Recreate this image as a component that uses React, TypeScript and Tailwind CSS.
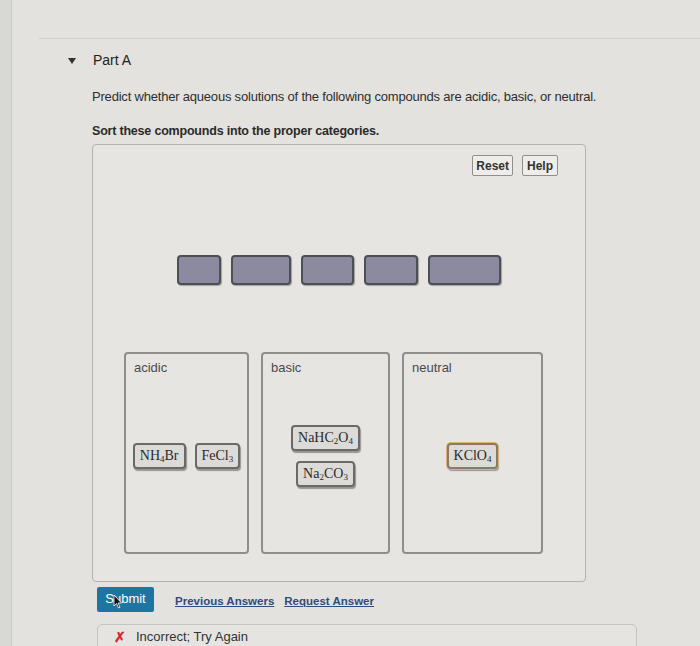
import { ReactNode } from 'react';

const sans = { fontFamily: '"Liberation Sans", Arial, sans-serif' };

function Chip({ children, glow }: { children: ReactNode; glow?: boolean }) {
  return (
    <div
      className={
        'rounded-[4px] border-2 bg-[#dcdbd7] px-[5px] py-[2px] text-[14px] leading-[18px] text-[#2a2a2a] shadow-[1px_2px_1px_rgba(0,0,0,0.35)] ' +
        (glow ? 'border-[#8a7a66] ring-1 ring-[#d8b27a]' : 'border-[#6a6a6a]')
      }
      style={{ fontFamily: '"Liberation Serif", "Times New Roman", serif' }}
    >
      {children}
    </div>
  );
}

function Category({ label, width, children }: { label: string; width: string; children: ReactNode }) {
  return (
    <div className={`flex h-[202px] flex-col rounded-[4px] border-2 border-[#8e8e8c] bg-[#e6e5e1] ${width}`}>
      <div className="px-[8px] pt-[4px] text-[13px] text-[#4a4a4a]">{label}</div>
      <div className="flex flex-1 items-center justify-center pb-[18px]">{children}</div>
    </div>
  );
}

const slots = ['w-[44px]', 'w-[60px]', 'w-[53px]', 'w-[54px]', 'w-[73px]'];

export default function App() {
  return (
    <div className="flex h-[646px] w-[700px] overflow-hidden bg-[#e3e2de]" style={sans}>
      <div className="w-[12px] shrink-0 border-r border-[#cacac6] bg-[#d8d8d5]" />
      <div className="flex-1 pt-[38px]">
        <div className="ml-[27px] border-t border-[#cfcfcb]">
          <div className="flex h-[42px] items-center pl-[29px] pt-[1px]">
            <svg width="8" height="6" viewBox="0 0 8 6" className="mt-[1px]">
              <path d="M0 0 H8 L4 6 Z" fill="#333" />
            </svg>
            <span className="ml-[17px] text-[14px] text-[#222]">Part A</span>
          </div>
          <div className="pl-[53px] pt-[6px]">
            <p className="text-[13px] tracking-[-0.2px] text-[#2e2e2e]">
              Predict whether aqueous solutions of the following compounds are acidic, basic, or neutral.
            </p>
            <p className="mt-[15px] text-[12.5px] font-bold tracking-[-0.2px] text-[#2a2a2a]">
              Sort these compounds into the proper categories.
            </p>
            <div className="mt-[4px] h-[438px] w-[494px] rounded-[4px] border border-[#b3b3b0] bg-[#e6e5e1] px-[31px] pt-[10px]">
              <div className="flex justify-end gap-[9px]">
                <button className="h-[21px] rounded-[2px] border border-[#8f8f8d] bg-[#eeede9] px-[3px] text-[12px] font-bold text-[#333]">
                  Reset
                </button>
                <button className="mr-[-4px] h-[21px] rounded-[2px] border border-[#8f8f8d] bg-[#eeede9] px-[4px] text-[12px] font-bold text-[#333]">
                  Help
                </button>
              </div>
              <div className="mt-[79px] flex justify-center gap-[10px]">
                {slots.map((w, i) => (
                  <div
                    key={i}
                    className={`h-[30px] rounded-[4px] border-2 border-[#4e4e56] bg-[#8b8a9e] shadow-[1px_1px_1px_rgba(0,0,0,0.3)] ${w}`}
                  />
                ))}
              </div>
              <div className="mt-[67px] flex gap-[12px]">
                <Category label="acidic" width="w-[125px]">
                  <div className="flex gap-[9px]">
                    <Chip>
                      NH<sub className="text-[9px]">4</sub>Br
                    </Chip>
                    <Chip>
                      FeCl<sub className="text-[9px]">3</sub>
                    </Chip>
                  </div>
                </Category>
                <Category label="basic" width="w-[129px]">
                  <div className="flex flex-col items-center gap-[10px]">
                    <Chip>
                      NaHC<sub className="text-[9px]">2</sub>O<sub className="text-[9px]">4</sub>
                    </Chip>
                    <Chip>
                      Na<sub className="text-[9px]">2</sub>CO<sub className="text-[9px]">3</sub>
                    </Chip>
                  </div>
                </Category>
                <Category label="neutral" width="w-[141px]">
                  <Chip glow>
                    KClO<sub className="text-[9px]">4</sub>
                  </Chip>
                </Category>
              </div>
            </div>
            <div className="mt-[4px] flex items-center pl-[5px]">
              <div className="relative">
                <button className="h-[25px] w-[57px] rounded-[2px] bg-[#1c76a1] text-[13px] text-white">Submit</button>
                <svg width="10" height="15" viewBox="0 0 10 15" className="absolute left-[16px] top-[8px]">
                  <path d="M1 1 V12 L3.5 9.5 L5.5 14 L7 13.3 L5 9 H8.5 Z" fill="#111" stroke="#fff" strokeWidth="0.8" />
                </svg>
              </div>
              <a className="ml-[21px] mt-[5px] text-[11.5px] font-bold text-[#2e4d7a] underline">Previous Answers</a>
              <a className="ml-[10px] mt-[5px] text-[11.5px] font-bold text-[#2e4d7a] underline">Request Answer</a>
            </div>
            <div className="ml-[5px] mt-[12px] h-[40px] w-[540px] rounded-t-[5px] border border-[#c4c4c0] bg-[#e5e4e0] pl-[16px] pt-[4px]">
              <div className="flex items-center gap-[10px]">
                <span className="text-[14px] font-bold leading-[16px] text-[#d8262a]">✗</span>
                <span className="text-[13px] leading-[16px] text-[#333]">Incorrect; Try Again</span>
              </div>
            </div>
          </div>
        </div>
      </div>
    </div>
  );
}
